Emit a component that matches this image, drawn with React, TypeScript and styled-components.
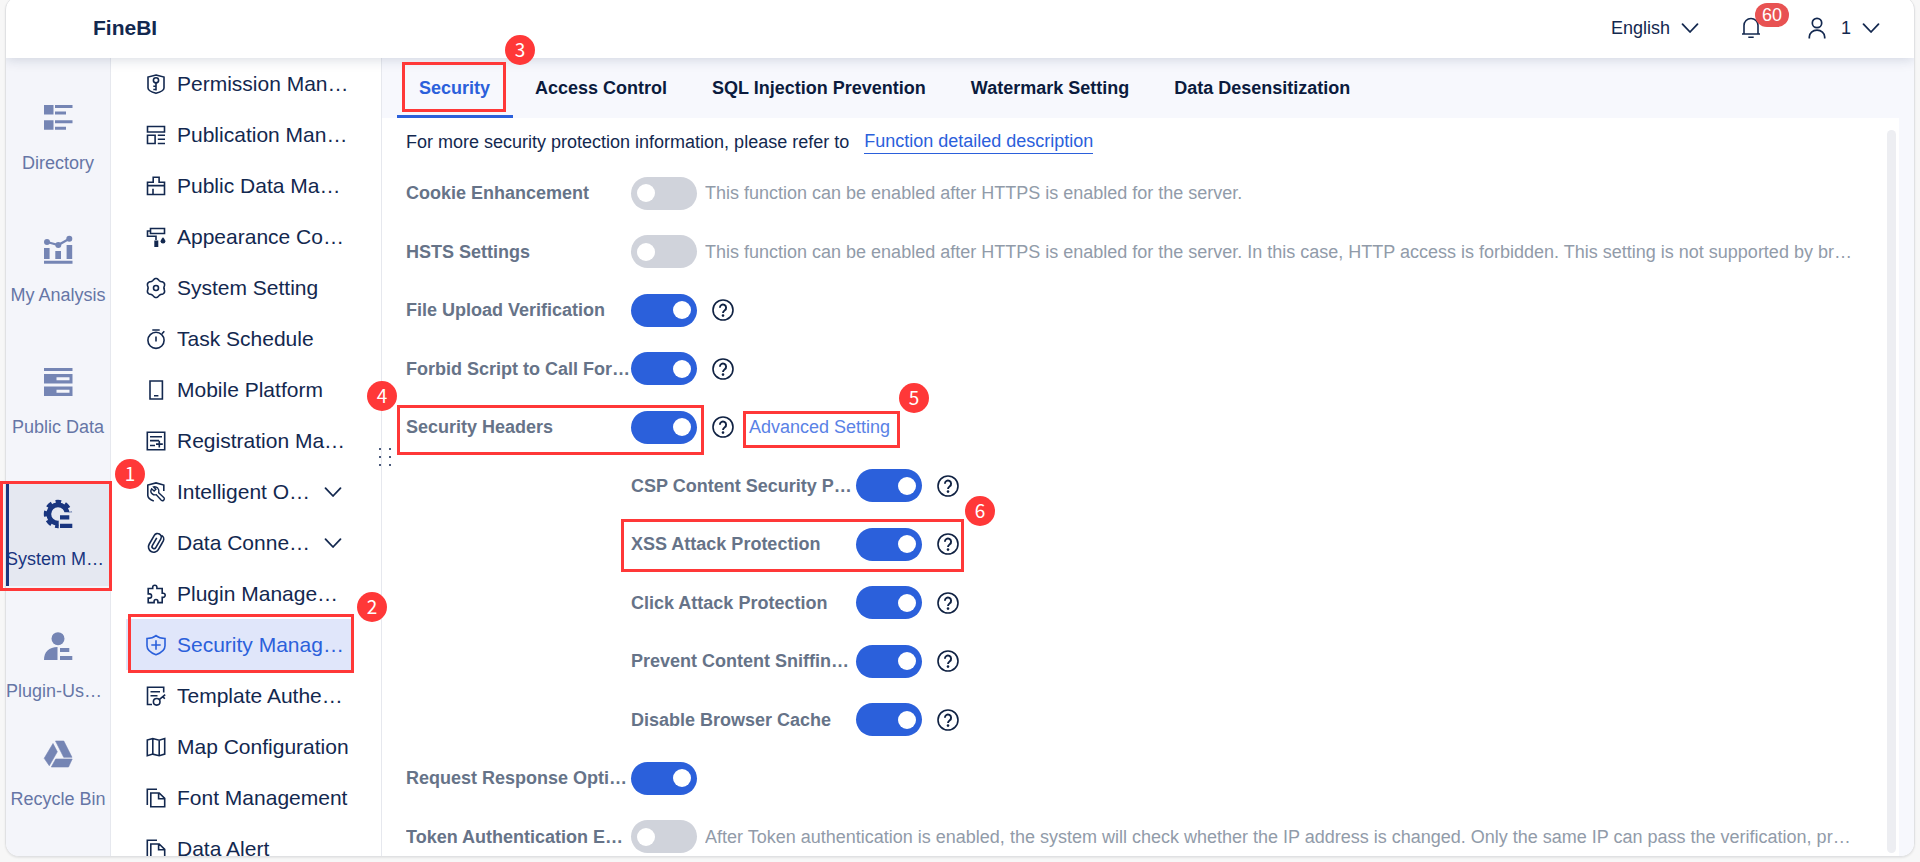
import React, { useState } from "react";
import styled, { createGlobalStyle, css } from "styled-components";

const color = {
  ink: "#13284f",
  tab: "#0b1b3d",
  blue: "#2b60db",
  label: "#667388",
  hint: "#919ba9",
  nav: "#6676a6",
  navIcon: "#7585b4",
  navActive: "#19357f",
  mark: "#ff3838",
  line: "#e6e8ee",
};

const GlobalStyle = createGlobalStyle`
  *, *::before, *::after { box-sizing: border-box; }
  body {
    margin: 0;
    background: #f7f7f7;
    color: ${color.ink};
    font: 18px/24px "Liberation Sans", Arial, sans-serif;
    overflow: hidden;
  }
  button, input, select { font: inherit; color: inherit; }
  ul { list-style: none; margin: 0; padding: 0; }
`;

const ellipsis = css`
  overflow: hidden;
  text-overflow: ellipsis;
  white-space: nowrap;
`;

const plainButton = css`
  border: 0;
  padding: 0;
  background: none;
  cursor: pointer;
`;

/* ---------- Frame ---------- */

const Page = styled.div`
  position: relative;
  height: 100vh;
  overflow: hidden;
`;

const Frame = styled.div`
  display: flex;
  flex-direction: column;
  height: calc(100vh - 1px);
  margin: -4px 5px 0;
  border: 1px solid #e0e1e3;
  border-radius: 14px;
  background: #fff;
  box-shadow: 0 1px 2px rgba(0, 0, 0, 0.08);
  overflow: hidden;
`;

const Body = styled.div`
  position: relative;
  display: flex;
  flex: 1;
  min-height: 0;
`;

/* ---------- Header ---------- */

const Header = styled.header`
  position: relative;
  z-index: 1;
  display: flex;
  flex: none;
  align-items: center;
  height: 61px;
  padding: 0 33px 0 87px;
  background: #fff;
  box-shadow: 0 1px 12px rgba(19, 40, 79, 0.18);
`;

const Brand = styled.h1`
  margin: 0 auto 0 0;
  font-size: 21px;
  line-height: 24px;
`;

const LanguageField = styled.label`
  display: flex;
  align-items: center;
  gap: 9px;
  margin-right: 41px;
`;

const LanguageSelect = styled.select`
  appearance: none;
  border: 0;
  padding: 0;
  background: none;
  line-height: 24px;
`;

const BellButton = styled.button`
  ${plainButton}
  position: relative;
  display: flex;
  margin-right: 46px;
`;

const Count = styled.span`
  position: absolute;
  left: 14px;
  top: -14px;
  padding: 0 7px;
  border-radius: 12px;
  background: #e85252;
  color: #fff;
  line-height: 24px;
`;

const UserButton = styled.button`
  ${plainButton}
  display: flex;
  align-items: center;
  gap: 10px;
`;

const UserName = styled.span`
  margin-left: 4px;
`;

/* ---------- Primary navigation ---------- */

const Rail = styled.nav`
  display: flex;
  flex: none;
  flex-direction: column;
  justify-content: space-between;
  width: 105px;
  padding: 30px 0;
  border-right: 1px solid ${color.line};
  background: #f4f5fa;
`;

const RailList = styled.ul`
  display: grid;
  grid-template-columns: minmax(0, 1fr);
  gap: 30px;
`;

const RailLink = styled.a<{ $active?: boolean }>`
  display: flex;
  flex-direction: column;
  align-items: center;
  gap: 19px;
  padding: 16px 0 15px;
  color: ${(p) => (p.$active ? color.navActive : color.nav)};
  background: ${(p) => (p.$active ? "#e5e8f1" : "none")};
  box-shadow: ${(p) => (p.$active ? `inset 3px 0 ${color.navActive}` : "none")};
  text-decoration: none;
  svg { color: ${(p) => (p.$active ? color.navActive : color.navIcon)}; }
`;

const RailLabel = styled.span`
  ${ellipsis}
  width: 100%;
  text-align: center;
`;

/* ---------- Secondary menu ---------- */

const Menu = styled.nav`
  flex: none;
  width: 271px;
  padding: 0 28px 0 15px;
  border-right: 1px solid ${color.line};
  overflow: hidden;
`;

const MenuLink = styled.a<{ $active?: boolean; $nested?: boolean }>`
  display: flex;
  align-items: center;
  height: 51px;
  padding: 0 ${(p) => (p.$nested ? 10 : 3)}px 0 20px;
  color: ${(p) => (p.$active ? color.blue : color.ink)};
  background: ${(p) => (p.$active ? "#e0e6fa" : "none")};
  font-size: 21px;
  text-decoration: none;
  svg { flex: none; }
`;

const MenuLabel = styled.span`
  ${ellipsis}
  flex: 1;
  margin: 0 0 0 11px;
`;

const ArrowSlot = styled.span`
  display: flex;
  margin-left: 8px;
`;

const Grip = styled.button`
  ${plainButton}
  position: absolute;
  left: 373px;
  top: 50%;
  display: grid;
  grid-template-columns: 2px 2px;
  gap: 6px 8px;
  transform: translateY(-50%);
  i {
    width: 2px;
    height: 2px;
    background: #4a5a7c;
  }
`;

/* ---------- Content ---------- */

const Main = styled.main`
  display: flex;
  flex: 1;
  flex-direction: column;
  min-width: 0;
  padding-right: 15px;
  background: #f7f8fd;
`;

const TabBar = styled.div`
  display: flex;
  flex: none;
  height: 60px;
  padding-left: 15px;
`;

const Tab = styled.button<{ $active?: boolean }>`
  ${plainButton}
  padding: 3px 23px 0 22px;
  border-bottom: 3px solid ${(p) => (p.$active ? color.blue : "transparent")};
  color: ${(p) => (p.$active ? color.blue : color.tab)};
  font-weight: bold;
`;

const Panel = styled.section`
  display: flex;
  flex: 1;
  min-height: 0;
  padding: 0 3px 0 24px;
  background: #fff;
  overflow: hidden;
`;

const PanelBody = styled.div`
  flex: 1;
  min-width: 0;
  margin-right: 32px;
`;

const ScrollThumb = styled.div`
  flex: none;
  width: 9px;
  margin: 12px 0 3px;
  border-radius: 5px;
  background: #edeef2;
`;

const Intro = styled.p`
  display: flex;
  gap: 15px;
  margin: 0;
  padding: 12px 0 10px;
`;

const IntroLink = styled.a`
  border-bottom: 1px solid ${color.blue};
  color: ${color.blue};
  line-height: 23px;
  text-decoration: none;
`;

const Settings = styled.div`
  display: grid;
  grid-template-columns: minmax(0, 1fr);
  grid-auto-rows: 1fr;
  min-height: 702px;
`;

const SettingRow = styled.div<{ $nested?: boolean }>`
  display: flex;
  align-items: center;
  min-width: 0;
  padding-left: ${(p) => (p.$nested ? 225 : 0)}px;
`;

const SettingLabel = styled.label`
  ${ellipsis}
  flex: none;
  width: 225px;
  color: ${color.label};
  font-weight: bold;
`;

const Switch = styled.input`
  appearance: none;
  flex: none;
  display: flex;
  align-items: center;
  width: 66px;
  height: 33px;
  margin: 0;
  padding: 0 6px;
  border-radius: 17px;
  background: #d0d3db;
  cursor: pointer;
  &::before {
    content: "";
    width: 18px;
    height: 18px;
    border-radius: 50%;
    background: #fff;
  }
  &:checked {
    justify-content: flex-end;
    background: ${color.blue};
  }
`;

const Hint = styled.span`
  ${ellipsis}
  margin-left: 8px;
  color: ${color.hint};
`;

const HelpButton = styled.button`
  ${plainButton}
  display: flex;
  margin-left: 15px;
`;

const AdvancedLink = styled.a`
  margin-left: 15px;
  color: #5a82e6;
  text-decoration: none;
`;

/* ---------- Step markers laid over the page ---------- */

const MarkBox = styled.div<{ $x: number; $y: number; $w: number; $h: number }>`
  position: absolute;
  z-index: 2;
  left: ${(p) => p.$x}px;
  top: ${(p) => p.$y}px;
  width: ${(p) => p.$w}px;
  height: ${(p) => p.$h}px;
  border: 3px solid ${color.mark};
  pointer-events: none;
`;

const MarkBadge = styled.span<{ $x: number; $y: number }>`
  position: absolute;
  z-index: 2;
  left: ${(p) => p.$x}px;
  top: ${(p) => p.$y}px;
  width: 30px;
  height: 30px;
  border-radius: 50%;
  background: ${color.mark};
  color: #fff;
  font: 19px/28px "Noto Sans CJK SC", sans-serif;
  text-align: center;
`;

/* ---------- Icons ---------- */

const Chevron = () => (
  <svg width="20" height="20" viewBox="0 0 20 20" fill="none" stroke="currentColor" strokeWidth="1.8" strokeLinecap="round" strokeLinejoin="round" aria-hidden>
    <path d="M2.500 6.200 10 14l7.500-7.800" />
  </svg>
);

const Bell = () => (
  <svg width="20" height="22" viewBox="0 0 20 22" fill="none" stroke="currentColor" strokeWidth="1.6" aria-hidden>
    <path d="M1 17h18M3 17V8.500a7 7 0 0 1 14 0V17M7.300 20.300h5.400" />
  </svg>
);

const Person = () => (
  <svg width="20" height="22" viewBox="0 0 20 22" fill="none" stroke="currentColor" strokeWidth="1.7" aria-hidden>
    <circle cx="10" cy="6" r="4.700" />
    <path d="M2.300 21.500v-1.500a7.700 6.800 0 0 1 15.400 0v1.500" />
  </svg>
);

const Help = () => (
  <svg width="22" height="22" viewBox="0 0 22 22" fill="none" stroke="#0f2142" strokeWidth="1.6" aria-hidden>
    <circle cx="11" cy="11" r="10" />
    <path d="M7.900 8.700a3.100 3.100 0 1 1 4.900 2.500c-1.200.9-1.800 1.400-1.800 2.900" strokeWidth="1.900" />
    <circle cx="11" cy="16.600" r="1.300" fill="#0f2142" stroke="none" />
  </svg>
);

const lobedOutline = (lobes: number, radius: number, depth: number) =>
  Array.from({ length: 96 }, (_, i) => {
    const a = (i / 96) * Math.PI * 2;
    const r = radius + depth * Math.cos(lobes * (a - Math.PI / 2));
    return `${(10 + r * Math.cos(a)).toFixed(2)},${(10 + r * Math.sin(a)).toFixed(2)}`;
  }).join(" ");

const menuIcons = {
  permission: (
    <>
      <path d="M10 1 18 3v11c0 2.500-4 4.200-8 5.300C6 18.200 2 16.500 2 14V3z" />
      <circle cx="10" cy="6.300" r="2.600" />
      <path d="M10 9v7.500M10 12.200H7.300M10 15.500H7.300" />
    </>
  ),
  publication: <path d="M1.500 1.500h17v5.500h-17zM1.500 10.200h7.600v8.300H1.500zM11.800 10.200H19M11.800 14.300H19M11.800 18.500H19" />,
  publicData: <path d="M1.500 6.200h5.700V1.300h5.900v4.900h5.400v12.300h-17zM1.500 9.600h17M7 18.500v-5.700" />,
  appearance: (
    <>
      <path d="M4.500 1.500h14v5h-14zM4.500 4h-3v5.200H10V13" />
      <path d="M8.300 13.500h4V20h-4z" fill="currentColor" stroke="none" />
      <path d="M17 10.200c1.600 2 2.400 3 2.400 4a2.400 2.400 0 0 1-4.800 0c0-1 .8-2 2.400-4z" fill="currentColor" stroke="none" />
    </>
  ),
  setting: (
    <>
      <polygon points={lobedOutline(6, 8.7, 0.8)} />
      <circle cx="10" cy="10" r="2.500" />
    </>
  ),
  schedule: (
    <>
      <circle cx="10" cy="11.300" r="8.100" />
      <path d="M6.300 1h7.400M10 7.500v5M16 4.800l2.300-2.600" />
    </>
  ),
  mobile: <path d="M4 1h12.400v18H4zM8 15.700h4.400" />,
  registration: <path d="M1.300 1.300h17.400v17.400H1.300zM4 5.700h12M4 9.600h9M4 14.500h5M13.300 9.800v6.600M10 13.100h6.800" />,
  intelligent: (
    <>
      <path d="M17.800 9V3L10 .9 1.800 3v10.500c0 2.600 2.400 4.200 6 5.500" />
      <path d="M7.600 4.900 9.900 7.300 8.100 9.100 5.600 6.800c-1.200 2-.7 4 .7 5.100 1.200 1 2.700 1.200 4 .8l5 5.600c1.600 1.300 4-.9 2.700-2.600l-5.300-5c.5-1.700.1-3.400-1-4.600-1.200-1.200-2.800-1.500-4.100-1.200z" strokeWidth="1.400" />
    </>
  ),
  connection: (
    <g transform="rotate(30 10 10)">
      <path d="M15.300 7.200V14.500a5.300 5.300 0 0 1-10.600 0V4.200a3.700 3.700 0 0 1 7.400 0v9.900a2 2 0 0 1-4 0V5.200M11 .6a4.300 4.300 0 0 1 4.300 4v3" />
    </g>
  ),
  plugin: <path d="M2.200 4.500h4.500V3.300a2.100 2.100 0 0 1 4.200 0v1.200h5.300v4.700h.9a2.100 2.100 0 0 1 0 4.200h-.9v5.200h-4.300v-1.200a1.900 1.900 0 0 0-3.800 0v1.200H2.200v-4.500h1.300a2 2 0 0 0 0-4.200H2.200z" />,
  security: <path d="M10 .6c2.500 2 5.500 2.700 9 2.900v7.300c0 4.200-4 7.200-9 8.900-5-1.700-9-4.700-9-8.900V3.500C4.500 3.300 7.500 2.600 10 .6zM10 5.300v9.400M5.300 10h9.400" />,
  template: (
    <>
      <path d="M17.700 6.500V1.300H1.500v17.200H6M4.500 5.700h9.500M4.500 9.700h7M13.200 13.600l6-5M16.800 10.600l2 2.200" />
      <circle cx="10.700" cy="15.800" r="3.300" />
    </>
  ),
  map: <path d="M1.300 3 6.800 1.500l6.400 1.700 5.500-1.700v15.600l-5.500 1.600-6.400-1.600-5.500 1.600zM6.800 1.500v15.600M13.200 3.200v15.500" />,
  pages: <path d="M1.300 17V1.300H11M4.800 5h8.400l5.500 5.300v8.400H4.800zM12.600 5v5.800h6" />,
};

type MenuIconName = keyof typeof menuIcons;

const MenuIcon = ({ name }: { name: MenuIconName }) => (
  <svg width="20" height="20" viewBox="0 0 20 20" overflow="visible" fill="none" stroke="currentColor" strokeWidth="1.6" aria-hidden>
    {menuIcons[name]}
  </svg>
);

const railIcons = {
  directory: <path d="M0 1h9.500v9.500H0zM11 1h17.500v3H11zM11 7.500h11v3H11zM0 16.300h9.500v9.500H0zM11 16.300h17.500v3H11zM11 22.800h11v3H11z" />,
  analysis: (
    <>
      <path d="M0 24.800h28.500v3H0zM0 12h5.600v11H0zM11.300 15H17v8h-5.700zM22.600 9h5.600v14h-5.600z" />
      <circle cx="3" cy="6" r="3" />
      <circle cx="14.300" cy="9" r="3" />
      <circle cx="25.300" cy="2.800" r="3" />
      <path d="M3 6l11.300 3 11-6.200" fill="none" stroke="currentColor" strokeWidth="2.200" />
    </>
  ),
  data: <path fillRule="evenodd" d="M0 0h28.500v3H0zM0 6h28.500v9.500H0zM12.500 9.300v3h13v-3zM0 18.500h28.500V28H0zM12.500 21.700v3h13v-3z" />,
  system: (
    <>
      <clipPath id="gear-cut">
        <path d="M-2-2h32v14.300H14.700V30H-2z" />
      </clipPath>
      <g clipPath="url(#gear-cut)" fill="none" stroke="currentColor">
        <circle cx="14" cy="14" r="9.200" strokeWidth="4.800" />
        <circle cx="14" cy="14" r="12.500" strokeWidth="3.400" strokeDasharray="5.600 4.218" strokeDashoffset="2.800" />
      </g>
      <path d="M16 15.300h9.300v4.200H16zM16 23.700h12.300V28H16z" />
    </>
  ),
  users: (
    <>
      <circle cx="14" cy="6.700" r="6.500" />
      <path d="M13.500 15v13H0C0 20 5 15 13.500 15zM16 16h9.300v4H16zM16 24h12.300v4H16z" />
    </>
  ),
  recycle: <path d="M11.500 1h8.300L28 17.300h-8.300zM9 3.500l4.300 8.300L5.300 25.700.2 18.300zM11.700 19h16.500l-3.700 8H7.300z" stroke="currentColor" strokeWidth="0.6" strokeLinejoin="round" />,
};

type RailIconName = keyof typeof railIcons;

const RailIcon = ({ name }: { name: RailIconName }) => (
  <svg width="28" height="28" viewBox="0 0 28 28" overflow="visible" fill="currentColor" aria-hidden>
    {railIcons[name]}
  </svg>
);

/* ---------- Data ---------- */

type RailEntry = { icon: RailIconName; label: string; active?: boolean };

const railTop: RailEntry[] = [
  { icon: "directory", label: "Directory" },
  { icon: "analysis", label: "My Analysis" },
  { icon: "data", label: "Public Data" },
  { icon: "system", label: "System Management", active: true },
  { icon: "users", label: "Plugin-User Management" },
];
const railBottom: RailEntry[] = [{ icon: "recycle", label: "Recycle Bin" }];

const menu: { icon: MenuIconName; label: string; nested?: boolean; active?: boolean }[] = [
  { icon: "permission", label: "Permission Management" },
  { icon: "publication", label: "Publication Management" },
  { icon: "publicData", label: "Public Data Management" },
  { icon: "appearance", label: "Appearance Configuration" },
  { icon: "setting", label: "System Setting" },
  { icon: "schedule", label: "Task Schedule" },
  { icon: "mobile", label: "Mobile Platform" },
  { icon: "registration", label: "Registration Management" },
  { icon: "intelligent", label: "Intelligent Operation", nested: true },
  { icon: "connection", label: "Data Connection", nested: true },
  { icon: "plugin", label: "Plugin Management" },
  { icon: "security", label: "Security Management", active: true },
  { icon: "template", label: "Template Authentication" },
  { icon: "map", label: "Map Configuration" },
  { icon: "pages", label: "Font Management" },
  { icon: "pages", label: "Data Alert" },
];

const tabs = ["Security", "Access Control", "SQL Injection Prevention", "Watermark Setting", "Data Desensitization"];

type Setting = { label: string; on: boolean; nested?: boolean; help?: boolean; hint?: string; advanced?: boolean };

const settings: Setting[] = [
  { label: "Cookie Enhancement", on: false, hint: "This function can be enabled after HTTPS is enabled for the server." },
  {
    label: "HSTS Settings",
    on: false,
    hint: "This function can be enabled after HTTPS is enabled for the server. In this case, HTTP access is forbidden. This setting is not supported by browsers of earlier versions.",
  },
  { label: "File Upload Verification", on: true, help: true },
  { label: "Forbid Script to Call Formula", on: true, help: true },
  { label: "Security Headers", on: true, help: true, advanced: true },
  { label: "CSP Content Security Policy", on: true, help: true, nested: true },
  { label: "XSS Attack Protection", on: true, help: true, nested: true },
  { label: "Click Attack Protection", on: true, help: true, nested: true },
  { label: "Prevent Content Sniffing Attack", on: true, help: true, nested: true },
  { label: "Disable Browser Cache", on: true, help: true, nested: true },
  { label: "Request Response Optimization", on: true },
  {
    label: "Token Authentication Enhancement",
    on: false,
    hint: "After Token authentication is enabled, the system will check whether the IP address is changed. Only the same IP can pass the verification, preventing token theft.",
  },
];

const marks = [
  { n: 1, box: [0, 481, 112, 110], badge: [115, 459] },
  { n: 2, box: [128, 614, 226, 59], badge: [357, 592] },
  { n: 3, box: [402, 62, 104, 50], badge: [505, 35] },
  { n: 4, box: [397, 405, 307, 50], badge: [367, 381] },
  { n: 5, box: [743, 411, 157, 37], badge: [899, 383] },
  { n: 6, box: [621, 519, 343, 53], badge: [965, 496] },
];

/* ---------- Composition ---------- */

const RailItems = ({ items }: { items: RailEntry[] }) => (
  <RailList>
    {items.map((item) => (
      <li key={item.label}>
        <RailLink href="#" $active={item.active}>
          <RailIcon name={item.icon} />
          <RailLabel>{item.label}</RailLabel>
        </RailLink>
      </li>
    ))}
  </RailList>
);

const SettingItem = ({ item, id }: { item: Setting; id: string }) => {
  const [on, setOn] = useState(item.on);
  return (
    <SettingRow $nested={item.nested}>
      <SettingLabel htmlFor={id}>{item.label}</SettingLabel>
      <Switch id={id} type="checkbox" role="switch" checked={on} onChange={() => setOn(!on)} />
      {item.hint && <Hint>{item.hint}</Hint>}
      {item.help && (
        <HelpButton type="button" aria-label={`Help: ${item.label}`}>
          <Help />
        </HelpButton>
      )}
      {item.advanced && <AdvancedLink href="#">Advanced Setting</AdvancedLink>}
    </SettingRow>
  );
};

export default function App() {
  const [tab, setTab] = useState(tabs[0]);
  return (
    <Page>
      <GlobalStyle />
      <Frame>
        <Header>
          <Brand>FineBI</Brand>
          <LanguageField>
            <LanguageSelect aria-label="Language">
              <option>English</option>
            </LanguageSelect>
            <Chevron />
          </LanguageField>
          <BellButton type="button" aria-label="Notifications">
            <Bell />
            <Count>60</Count>
          </BellButton>
          <UserButton type="button" aria-label="Account">
            <Person />
            <UserName>1</UserName>
            <Chevron />
          </UserButton>
        </Header>
        <Body>
          <Rail>
            <RailItems items={railTop} />
            <RailItems items={railBottom} />
          </Rail>
          <Menu>
            <ul>
              {menu.map((item) => (
                <li key={item.label}>
                  <MenuLink href="#" $active={item.active} $nested={item.nested}>
                    <MenuIcon name={item.icon} />
                    <MenuLabel>{item.label}</MenuLabel>
                    {item.nested && (
                      <ArrowSlot>
                        <Chevron />
                      </ArrowSlot>
                    )}
                  </MenuLink>
                </li>
              ))}
            </ul>
          </Menu>
          <Main>
            <TabBar role="tablist">
              {tabs.map((name) => (
                <Tab key={name} type="button" role="tab" aria-selected={name === tab} $active={name === tab} onClick={() => setTab(name)}>
                  {name}
                </Tab>
              ))}
            </TabBar>
            <Panel>
              <PanelBody>
                <Intro>
                  <span>For more security protection information, please refer to</span>
                  <IntroLink href="#">Function detailed description</IntroLink>
                </Intro>
                <Settings>
                  {settings.map((item, i) => (
                    <SettingItem key={item.label} item={item} id={`setting-${i}`} />
                  ))}
                </Settings>
              </PanelBody>
              <ScrollThumb />
            </Panel>
          </Main>
          <Grip type="button" aria-label="Resize menu">
            <i /><i /><i /><i /><i /><i />
          </Grip>
        </Body>
      </Frame>
      {marks.map(({ n, box: [x, y, w, h], badge: [bx, by] }) => (
        <React.Fragment key={n}>
          <MarkBox $x={x} $y={y} $w={w} $h={h} />
          <MarkBadge $x={bx} $y={by}>{n}</MarkBadge>
        </React.Fragment>
      ))}
    </Page>
  );
}
